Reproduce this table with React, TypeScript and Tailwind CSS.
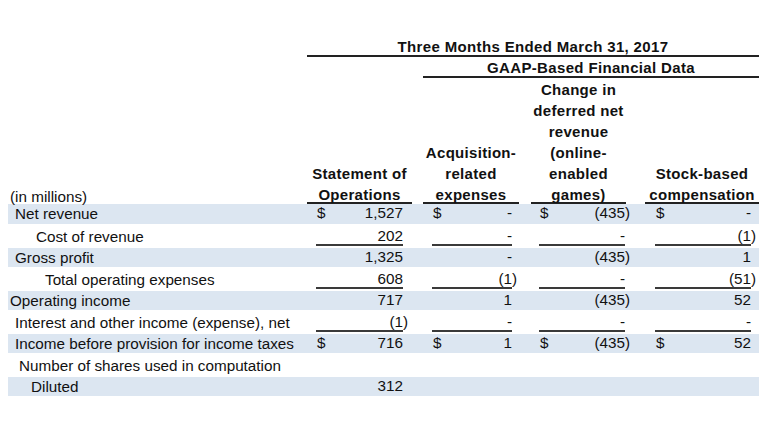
import type { ReactNode } from "react";

// column tracks: label | statement | gap | acquisition | gap | deferred | gap | stock
const GRID = "grid grid-cols-[299px_105px_11px_96px_12px_95px_19px_114px]";

// inner box (dollar sign .. right edge of a positive amount) per data column
const INNER = ["ml-[9px] mr-[9px]", "ml-[9px] mr-[7px]", "ml-[8px] mr-px", "ml-[10px] mr-[8px]"];

type Row = {
  label: string;
  indent: string;
  shade?: boolean;
  dollar?: boolean;
  under?: boolean;
  vals: (string | null)[];
};

const ROWS: Row[] = [
  { label: "Net revenue", indent: "pl-[7px]", shade: true, dollar: true, vals: ["1,527", "-", "(435)", "-"] },
  { label: "Cost of revenue", indent: "pl-[28px]", under: true, vals: ["202", "-", "-", "(1)"] },
  { label: "Gross profit", indent: "pl-[7px]", shade: true, vals: ["1,325", "-", "(435)", "1"] },
  { label: "Total operating expenses", indent: "pl-[37px]", under: true, vals: ["608", "(1)", "-", "(51)"] },
  { label: "Operating income", indent: "pl-[2px]", shade: true, vals: ["717", "1", "(435)", "52"] },
  {
    label: "Interest and other income (expense), net",
    indent: "pl-[7px]",
    under: true,
    vals: ["(1)", "-", "-", "-"],
  },
  {
    label: "Income before provision for income taxes",
    indent: "pl-[7px]",
    shade: true,
    dollar: true,
    vals: ["716", "1", "(435)", "52"],
  },
  { label: "Number of shares used in computation", indent: "pl-[11px]", vals: [null, null, null, null] },
  { label: "Diluted", indent: "pl-[23px]", shade: true, vals: ["312", null, null, null] },
];

/** Accounting style: the closing paren hangs past the column edge. */
function Amount({ v }: { v: string }) {
  if (v.startsWith("(")) {
    return (
      <span className="relative">
        {v.slice(0, -1)}
        <span className="absolute top-0 left-full">)</span>
      </span>
    );
  }
  return <span>{v}</span>;
}

function Cell({ v, pos, dollar, under }: { v: string | null; pos: string; dollar?: boolean; under?: boolean }) {
  const show = v !== null;
  return (
    <div className="flex items-center">
      <div
        className={`flex h-[19px] flex-1 justify-between border-b-2 pl-px leading-[17px] ${pos} ${
          under && show ? "border-[#3a3a3a]" : "border-transparent"
        }`}
      >
        <span>{dollar && show ? "$" : ""}</span>
        {show ? <Amount v={v} /> : null}
      </div>
    </div>
  );
}

function Heading({ lines, className = "" }: { lines: string[]; className?: string }) {
  return (
    <div className={`flex h-[126px] flex-col justify-end border-b-2 border-[#222] ${className}`}>
      <div className="-mb-[3px]">
        {lines.map((l) => (
          <div key={l} className="h-[21px] leading-[21px]">
            {l}
          </div>
        ))}
      </div>
    </div>
  );
}

function DataRow({ row, first }: { row: Row; first: boolean }): ReactNode {
  return (
    <div
      className={`${GRID} h-[21.5px] border-b-2 border-white ${first ? "" : "border-t"} ${
        row.shade ? "bg-[#dce6f1]" : "bg-white"
      }`}
    >
      <div className={`flex items-center whitespace-nowrap leading-[17px] ${row.indent}`}>{row.label}</div>
      <Cell v={row.vals[0]} pos={INNER[0]} dollar={row.dollar} under={row.under} />
      <div />
      <Cell v={row.vals[1]} pos={INNER[1]} dollar={row.dollar} under={row.under} />
      <div />
      <Cell v={row.vals[2]} pos={INNER[2]} dollar={row.dollar} under={row.under} />
      <div />
      <Cell v={row.vals[3]} pos={INNER[3]} dollar={row.dollar} under={row.under} />
    </div>
  );
}

export default function App() {
  return (
    <div className="h-[431px] w-[767px] overflow-hidden bg-white pt-[36px] pl-[8px] font-['Liberation_Sans',Arial,sans-serif] text-[15.25px] text-[#111]">
      <div className="w-[751px]">
        <div className={GRID}>
          <div className="col-span-7 col-start-2 h-[21px] border-b-2 border-[#222] pt-[2px] text-center text-[15px] leading-[17px] font-bold tracking-[0.35px]">
            Three Months Ended March 31, 2017
          </div>
        </div>
        <div className={GRID}>
          <div className="col-span-5 col-start-4 h-[21px] border-b-2 border-[#222] pt-[3px] text-center text-[15px] leading-[16px] font-bold tracking-[0.35px]">
            GAAP-Based Financial Data
          </div>
        </div>
        <div className={GRID}>
          <div className="flex h-[126px] flex-col justify-end pl-[2px]">
            <div className="-mb-[3px] h-[21px] leading-[21px]">(in millions)</div>
          </div>
          <Heading className="text-center text-[15px] font-bold tracking-[0.3px]" lines={["Statement of", "Operations"]} />
          <div />
          <Heading
            className="text-center text-[15px] font-bold tracking-[0.3px]"
            lines={["Acquisition-", "related", "expenses"]}
          />
          <div />
          <Heading
            className="text-center text-[15px] font-bold tracking-[0.3px]"
            lines={["Change in", "deferred net", "revenue", "(online-", "enabled", "games)"]}
          />
          <div />
          <Heading className="text-center text-[15px] font-bold tracking-[0.3px]" lines={["Stock-based", "compensation"]} />
        </div>
        {ROWS.map((r, i) => (
          <DataRow key={r.label} row={r} first={i === 0} />
        ))}
      </div>
    </div>
  );
}
